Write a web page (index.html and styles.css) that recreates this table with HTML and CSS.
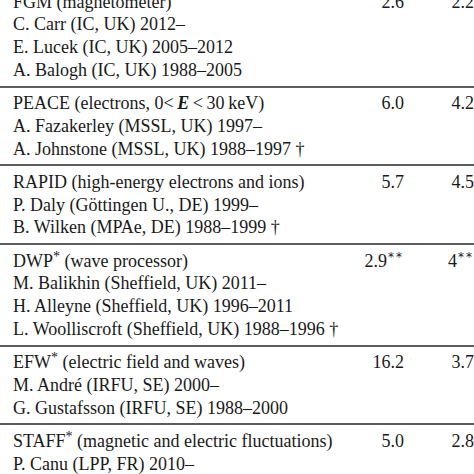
FILE: index.html
```html
<!DOCTYPE html>
<html>
<head>
<meta charset="utf-8">
<link rel="stylesheet" href="styles.css">
</head>
<body>
<div class="table">
  <div class="section">
    <div class="names">
      <div>FGM (magnetometer)</div>
      <div>C. Carr (IC, UK) 2012–</div>
      <div>E. Lucek (IC, UK) 2005–2012</div>
      <div>A. Balogh (IC, UK) 1988–2005</div>
    </div>
    <div class="num">2.6</div>
    <div class="num">2.2</div>
  </div>
  <div class="section">
    <div class="names">
      <div>PEACE (electrons, 0&lt;&thinsp;<b class="bi">E</b>&thinsp;&lt;&thinsp;30&thinsp;keV)</div>
      <div>A. Fazakerley (MSSL, UK) 1997–</div>
      <div>A. Johnstone (MSSL, UK) 1988–1997 †</div>
    </div>
    <div class="num">6.0</div>
    <div class="num">4.2</div>
  </div>
  <div class="section">
    <div class="names">
      <div>RAPID (high-energy electrons and ions)</div>
      <div>P. Daly (Göttingen U., DE) 1999–</div>
      <div>B. Wilken (MPAe, DE) 1988–1999 †</div>
    </div>
    <div class="num">5.7</div>
    <div class="num">4.5</div>
  </div>
  <div class="section">
    <div class="names">
      <div>DWP<sup class="ast">*</sup> (wave processor)</div>
      <div>M. Balikhin (Sheffield, UK) 2011–</div>
      <div>H. Alleyne (Sheffield, UK) 1996–2011</div>
      <div>L. Woolliscroft (Sheffield, UK) 1988–1996 †</div>
    </div>
    <div class="num">2.9<sup class="sans">**</sup></div>
    <div class="num">4<sup class="sans">**</sup></div>
  </div>
  <div class="section">
    <div class="names">
      <div>EFW<sup class="ast">*</sup> (electric field and waves)</div>
      <div>M. André (IRFU, SE) 2000–</div>
      <div>G. Gustafsson (IRFU, SE) 1988–2000</div>
    </div>
    <div class="num">16.2</div>
    <div class="num">3.7</div>
  </div>
  <div class="section">
    <div class="names">
      <div>STAFF<sup class="ast">*</sup> (magnetic and electric fluctuations)</div>
      <div>P. Canu (LPP, FR) 2010–</div>
      <div>N. Cornilleau-Wehrlin (LPP, FR) 1988–2010</div>
    </div>
    <div class="num">5.0</div>
    <div class="num">2.8</div>
  </div>
</div>
</body>
</html>
```

FILE: styles.css
```css
html, body {
  margin: 0;
  padding: 0;
  background: #ffffff;
  overflow: hidden;
}
body {
  width: 474px;
  height: 474px;
}
.table {
  width: 474px;
  margin-top: -16px;
  font-family: "Liberation Serif", "Times New Roman", serif;
  font-size: 18px;
  line-height: 22.75px;
  color: #1a1a1a;
}
.section {
  display: grid;
  grid-template-columns: 1fr 60px 70px;
  border-top: 2px solid #5c5c5c;
  padding: 4.5px 0 4px 13px;
  align-items: start;
}
.section:first-child {
  border-top-color: transparent;
}
.names div {
  white-space: nowrap;
}
.num {
  text-align: right;
  white-space: nowrap;
}
.bi {
  font-weight: bold;
  font-style: italic;
}
sup {
  line-height: 0;
  vertical-align: baseline;
  position: relative;
}
.ast {
  font-size: 14px;
  top: -6px;
}
.sans {
  font-family: "DejaVu Sans", sans-serif;
  font-size: 12px;
  letter-spacing: 2px;
  top: -6px;
  margin-left: 1px;
}
```
